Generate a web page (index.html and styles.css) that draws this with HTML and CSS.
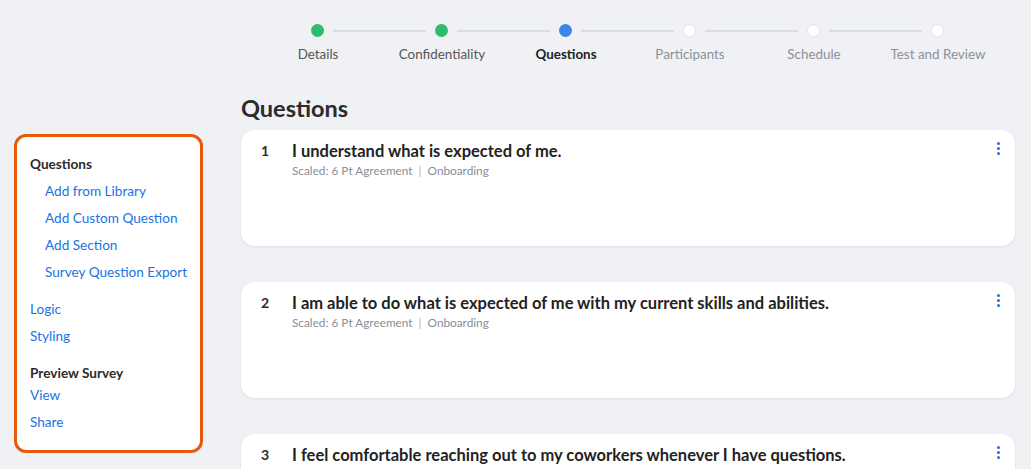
FILE: index.html
```html
<!DOCTYPE html>
<html lang="en">
<head>
    <meta charset="UTF-8">
    <title>Survey Questions</title>
    <link rel="stylesheet" href="styles.css">
</head>
<body>
    <div class="stepper">
        <div class="track">
            <span class="dot done"></span><span class="line"></span>
            <span class="dot done"></span><span class="line"></span>
            <span class="dot current"></span><span class="line"></span>
            <span class="dot"></span><span class="line"></span>
            <span class="dot"></span><span class="line"></span>
            <span class="dot"></span>
        </div>
        <div class="labels">
            <span class="step done">Details</span>
            <span class="step done">Confidentiality</span>
            <span class="step current">Questions</span>
            <span class="step">Participants</span>
            <span class="step">Schedule</span>
            <span class="step">Test and Review</span>
        </div>
    </div>

    <div class="main">
        <div class="sidebar">
            <div class="side-title">Questions</div>
            <a class="side-link sub" href="#">Add from Library</a>
            <a class="side-link sub" href="#">Add Custom Question</a>
            <a class="side-link sub" href="#">Add Section</a>
            <a class="side-link sub" href="#">Survey Question Export</a>
            <a class="side-link gap" href="#">Logic</a>
            <a class="side-link" href="#">Styling</a>
            <div class="side-title preview">Preview Survey</div>
            <a class="side-link tight" href="#">View</a>
            <a class="side-link" href="#">Share</a>
        </div>

        <div class="content">
            <h1>Questions</h1>
            <div class="card">
                <span class="num">1</span>
                <div class="q">
                    <div class="q-title">I understand what is expected of me.</div>
                    <div class="q-meta">Scaled: 6 Pt Agreement <span class="sep">|</span> Onboarding</div>
                </div>
                <span class="kebab"><i></i><i></i><i></i></span>
            </div>
            <div class="card">
                <span class="num">2</span>
                <div class="q">
                    <div class="q-title">I am able to do what is expected of me with my current skills and abilities.</div>
                    <div class="q-meta">Scaled: 6 Pt Agreement <span class="sep">|</span> Onboarding</div>
                </div>
                <span class="kebab"><i></i><i></i><i></i></span>
            </div>
            <div class="card">
                <span class="num">3</span>
                <div class="q">
                    <div class="q-title">I feel comfortable reaching out to my coworkers whenever I have questions.</div>
                    <div class="q-meta">Scaled: 6 Pt Agreement <span class="sep">|</span> Onboarding</div>
                </div>
                <span class="kebab"><i></i><i></i><i></i></span>
            </div>
        </div>
    </div>
</body>
</html>
```

FILE: styles.css
```css
body {
    margin: 0;
    height: 469px;
    background-color: #f0f1f5;
    font-family: Lato, "Open Sans", sans-serif;
    color: #2b2b2b;
    overflow: hidden;
}
.stepper {
    padding: 23px 0 0 256px;
}
.track {
    display: flex;
    align-items: center;
    padding-left: 55px;
    height: 14px;
}
.dot {
    width: 13px;
    height: 13px;
    border-radius: 50%;
    background: #fff;
    box-shadow: inset 0 0 0 1px #dfe2e8;
    flex: none;
}
.dot.done {
    background: #2ebd6e;
    box-shadow: none;
}
.dot.current {
    background: #3b86ec;
    box-shadow: none;
}
.line {
    width: 93px;
    height: 2px;
    background: #d9dce2;
    margin: 2px 9px 0 9px;
    flex: none;
}
.labels {
    display: flex;
    margin-top: 8px;
}
.step {
    width: 124px;
    text-align: center;
    font-size: 13.4px;
    line-height: 18px;
    color: #8c9099;
}
.step.done {
    color: #555;
}
.step.current {
    color: #222;
    font-weight: 700;
}
.main {
    display: flex;
    align-items: flex-start;
    padding-left: 14px;
}
.sidebar {
    width: 170px;
    margin-top: 71px;
    padding: 14px 0 14px 13px;
    background: #fff;
    border: 3px solid #e8590c;
    border-radius: 12px;
}
.side-title {
    font-size: 13.6px;
    font-weight: 700;
    line-height: 27px;
    color: #2b2b2b;
}
.side-title.preview {
    margin-top: 12px;
    line-height: 22px;
}
.side-link {
    display: block;
    font-size: 13.6px;
    line-height: 27px;
    color: #1a73e3;
    text-decoration: none;
}
.side-link.sub {
    padding-left: 15px;
}
.side-link.gap {
    margin-top: 10px;
}
.side-link.tight {
    line-height: 22px;
    margin-bottom: 3px;
}
.content {
    margin-left: 38px;
    width: 774px;
}
h1 {
    margin: 0;
    padding-top: 30px;
    font-size: 23.5px;
    line-height: 30px;
    font-weight: 700;
    color: #2b2b2b;
    height: 37px;
}
.card {
    display: flex;
    align-items: flex-start;
    height: 105px;
    padding: 11px 0 0 20px;
    margin-bottom: 36px;
    background: #fff;
    border-radius: 14px;
    box-shadow: 0 1px 3px rgba(0, 0, 0, 0.08);
}
.num {
    width: 31px;
    font-size: 14px;
    font-weight: 700;
    line-height: 20px;
    color: #2b2b2b;
}
.q {
    flex: 1;
}
.q-title {
    font-size: 16.5px;
    font-weight: 700;
    line-height: 20px;
    color: #222;
}
.q-meta {
    margin-top: 2px;
    font-size: 11.8px;
    line-height: 16px;
    color: #8a8e97;
}
.sep {
    color: #b5b8be;
    margin: 0 3px;
}
.kebab {
    display: flex;
    flex-direction: column;
    gap: 2px;
    margin: 1px 15px 0 0;
}
.kebab i {
    width: 3px;
    height: 3px;
    border-radius: 50%;
    background: #1a73e3;
}
```
